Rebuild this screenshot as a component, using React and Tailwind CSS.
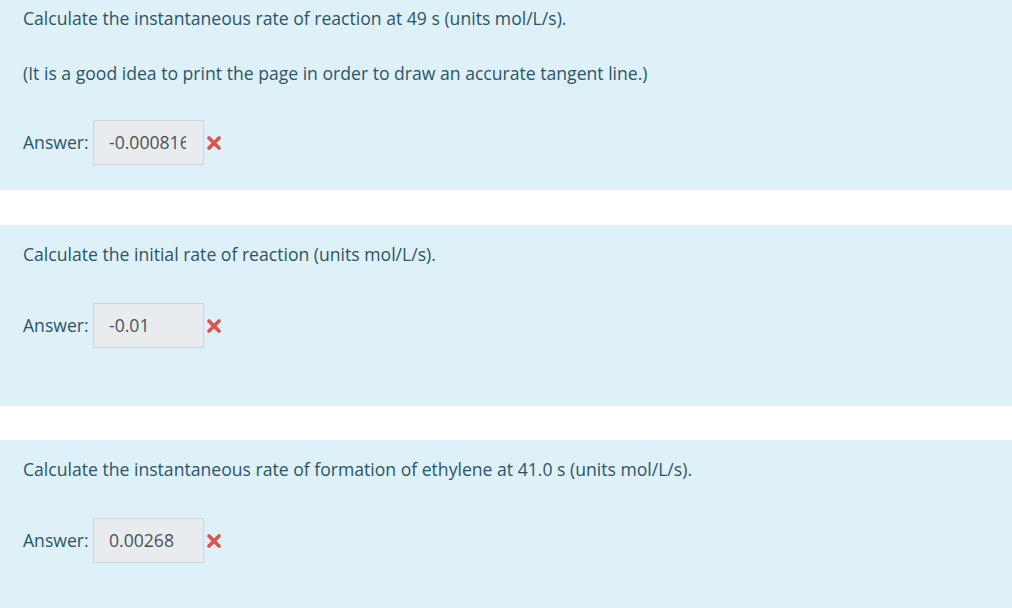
import React from "react";

const XMark = () => (
  <svg width="14" height="14" viewBox="0 0 14 14">
    <path d="M2 2 L12 12 M12 2 L2 12" stroke="#dc5350" strokeWidth="3.6" strokeLinecap="round" />
  </svg>
);

const AnswerRow = ({ value }) => (
  <div className="flex items-center">
    <span className="w-[70px]">Answer:</span>
    <div className="w-[111px] h-[45px] flex items-center pl-[15px] bg-[#e9ecef] border border-[#ced4da] text-[#495057]">
      <span className="block w-[77px] overflow-hidden whitespace-nowrap">{value}</span>
    </div>
    <span className="ml-[3px] flex items-center">
      <XMark />
    </span>
  </div>
);

export default function App() {
  return (
    <div
      className="w-[1012px] h-[608px] overflow-hidden bg-white text-[17.6px] text-[#2c5468]"
      style={{ fontFamily: '"Segoe UI", "Open Sans", sans-serif' }}
    >
      <div className="bg-[#def1f8] h-[190px] px-[23px] pt-[6px]">
        <p className="leading-[24px]">
          Calculate the instantaneous rate of reaction at 49 s (units mol/L/s).
        </p>
        <p className="leading-[24px] mt-[31px]">
          (It is a good idea to print the page in order to draw an accurate tangent line.)
        </p>
        <div className="mt-[35px]">
          <AnswerRow value="-0.000816" />
        </div>
      </div>
      <div className="h-[35px]" />
      <div className="bg-[#def1f8] h-[181px] px-[23px] pt-[17px]">
        <p className="leading-[24px]">Calculate the initial rate of reaction (units mol/L/s).</p>
        <div className="mt-[37px]">
          <AnswerRow value="-0.01" />
        </div>
      </div>
      <div className="h-[34px]" />
      <div className="bg-[#def1f8] h-[168px] px-[23px] pt-[17px]">
        <p className="leading-[24px]">
          Calculate the instantaneous rate of formation of ethylene at 41.0 s (units mol/L/s).
        </p>
        <div className="mt-[37px]">
          <AnswerRow value="0.00268" />
        </div>
      </div>
    </div>
  );
}
